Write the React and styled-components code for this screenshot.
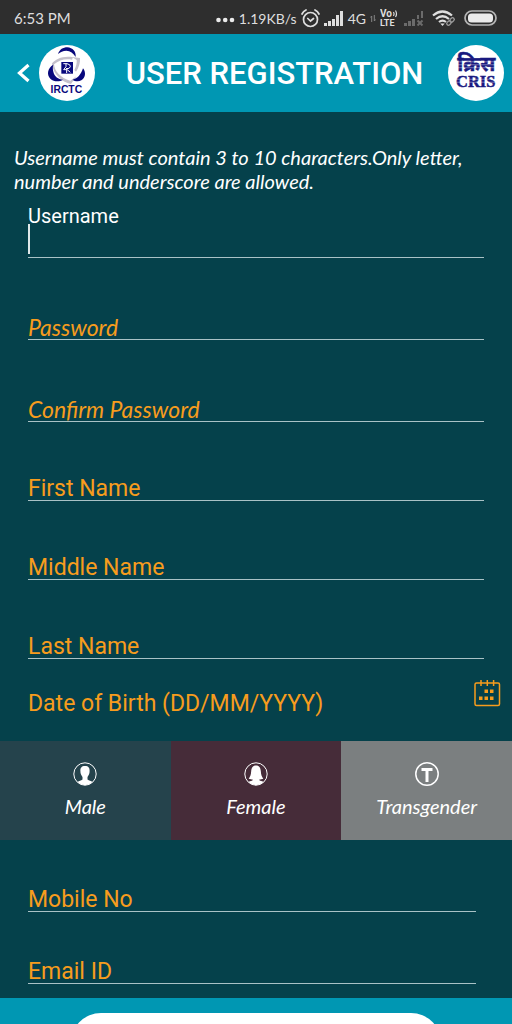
import React from "react";
import styled, { createGlobalStyle } from "styled-components";

const GlobalStyle=createGlobalStyle`
    * {
        box-sizing: border-box;
    }
    body {
        margin: 0;
        background: #05414b;
        font-family: Roboto, "Noto Sans", sans-serif;
    }
    button, input {
        font: inherit;
        color: inherit;
    }
`;

const handFont=`Lato, "Open Sans", sans-serif`;

const Screen=styled.div`
    display: flex;
    flex-direction: column;
    height: 100vh;
    color: #fff;
`;

const StatusBar=styled.div`
    display: flex;
    align-items: center;
    justify-content: space-between;
    flex: none;
    height: 34px;
    padding: 2px 15px 0 14px;
    background: #2e2e2e;
    color: #dedede;
    font-family: ${handFont};
    font-size: 15px;
`;

const StatusIcons=styled.div`
    display: flex;
    align-items: center;
    gap: 4px;
    font-size: 14px;
`;

const Header=styled.header`
    display: flex;
    align-items: center;
    flex: none;
    height: 78px;
    padding: 0 8px 0 16px;
    background: #0097b3;
`;

const BackButton=styled.button`
    display: flex;
    padding: 0;
    margin-right: 8px;
    border: 0;
    background: none;
`;

const Title=styled.h1`
    flex: 1;
    margin: 0;
    padding-left: 6px;
    font-size: 31px;
    font-weight: 500;
    text-align: center;
    white-space: nowrap;
`;

const Content=styled.main`
    flex: 1;
    min-height: 0;
    overflow-y: auto;
    scrollbar-width: none;
`;

const Note=styled.p`
    margin: 0;
    padding: 33px 14px 15px;
    font-family: ${handFont};
    font-size: 20px;
    font-style: italic;
    line-height: 24px;
`;

const FieldGroup=styled.div`
    display: flex;
    flex-direction: column;
    gap: ${props=>props.$gap}px;
    padding: ${props=>props.$gap}px ${props=>props.$right || 28}px 0 28px;
`;

const FieldBox=styled.div`
    display: grid;
    border-bottom: 1px solid #a9c2c6;
    > * {
        grid-area: 1 / 1;
    }
`;

const FieldLabel=styled.label`
    color: #f79c1d;
    font-family: ${props=>props.$hand ? handFont : "inherit"};
    font-style: ${props=>props.$hand ? "italic" : "normal"};
    font-size: 23px;
    line-height: ${props=>props.$hand ? 24 : 22}px;
    white-space: nowrap;
`;

const Input=styled.input`
    width: 100%;
    min-width: 0;
    height: 22px;
    padding: 0;
    border: 0;
    outline: 0;
    background: none;
`;

const Username=styled.div`
    padding: 0 28px;
`;

const UsernameLabel=styled.label`
    display: block;
    font-size: 20px;
    line-height: 16px;
`;

const Caret=styled.span`
    width: 2px;
    height: 30px;
    margin-bottom: 3px;
    background: #dfe8e9;
`;

const BirthRow=styled.div`
    display: flex;
    align-items: flex-end;
    padding: 21px 11px 26px 28px;
`;

const CalendarButton=styled.button`
    display: flex;
    padding: 0;
    margin-bottom: 8px;
    border: 0;
    background: none;
    color: #f79c1d;
`;

const Genders=styled.div`
    display: grid;
    grid-template-columns: repeat(3, 1fr);
`;

const Gender=styled.label`
    display: flex;
    flex-direction: column;
    align-items: center;
    gap: 8px;
    padding: 21px 0 22px;
    background: ${props=>props.$color};
    font-family: ${handFont};
    font-size: 20px;
    font-style: italic;
    line-height: 24px;
`;

const Radio=styled.input`
    position: absolute;
    opacity: 0;
    pointer-events: none;
`;

const Footer=styled.footer`
    margin-top: 14px;
    padding: 15px 71px;
    background: #0097b3;
`;

const SubmitButton=styled.button`
    display: block;
    width: 100%;
    height: 60px;
    border: 0;
    border-radius: 30px;
    background: #fff;
`;

const Bars=()=>(
    <svg width="20" height="15" viewBox="0 0 20 15" fill="#dedede">
        <rect x="0" y="12" width="3" height="3" />
        <rect x="4" y="10" width="3" height="5" />
        <rect x="8" y="8" width="3" height="7" />
        <rect x="12" y="4" width="3" height="11" />
        <rect x="16" y="0" width="3" height="15" />
    </svg>
);

const NoSignal=()=>(
    <svg width="24" height="15" viewBox="0 0 24 15" fill="#6b6b6b">
        <rect x="0" y="12" width="3" height="3" />
        <rect x="4" y="10" width="3" height="5" />
        <rect x="8" y="8" width="3" height="7" />
        <rect x="13" y="4" width="2" height="4" />
        <rect x="17" y="0" width="2" height="7" />
        <path d="M13.500 9.500l5 5M18.500 9.500l-5 5" stroke="#6b6b6b" strokeWidth="2" />
    </svg>
);

const Alarm=()=>(
    <svg width="19" height="19" viewBox="0 0 19 19" fill="none" stroke="#dedede" strokeWidth="1.700" strokeLinecap="round">
        <circle cx="9.500" cy="10.500" r="7" />
        <path d="M1 5C2 3 3 2 5 1M18 5C17 3 16 2 14 1M6.800 9.500L9.500 12L12.500 9.500" />
    </svg>
);

const DataArrows=()=>(
    <svg width="6" height="7" viewBox="0 0 6 7" stroke="#858585" fill="none">
        <path d="M1.700 7V1L0.300 2.500M4.300 0v6L5.700 4.500" />
    </svg>
);

const Volte=()=>(
    <svg width="20" height="18" viewBox="0 0 20 18" fill="#dedede" fontFamily="Roboto" fontWeight="700">
        <text x="0" y="8" fontSize="10">Vo</text>
        <text x="0" y="17" fontSize="9">LTE</text>
        <path d="M13.500 3Q14.800 5 13.500 7M15.500 1.500Q17.500 5 15.500 8" fill="none" stroke="#dedede" strokeWidth="1.200" />
    </svg>
);

const Wifi=()=>(
    <svg width="28" height="17" viewBox="0 0 28 17" fill="none" stroke="#dedede" strokeWidth="2.200">
        <path d="M1 5.500Q10.500-2.500 20 5.500M4 9Q10.500 3.500 17 9M7 12Q10.500 9.200 14 12" />
        <path d="M8.300 13.500h4.400L10.500 16z" fill="#dedede" stroke="none" />
        <g stroke="#9c9c9c" strokeWidth="1.300">
            <rect x="14.500" y="11.300" width="5" height="3.400" rx="1.700" transform="rotate(-45 17 13)" />
            <rect x="17.500" y="8.300" width="5" height="3.400" rx="1.700" transform="rotate(-45 20 10)" />
        </g>
    </svg>
);

const Battery=()=>(
    <svg width="33" height="16" viewBox="0 0 33 16">
        <rect x="1" y="1" width="31" height="14" rx="7" fill="none" stroke="#b5b5b5" strokeWidth="1.700" />
        <rect x="4" y="3.500" width="25" height="9" rx="3.500" fill="#ebebeb" />
    </svg>
);

const IrctcLogo=()=>(
    <svg width="56" height="56" viewBox="120 136 168 168" role="img" aria-label="IRCTC">
        <circle cx="204" cy="220" r="84" fill="#fff" />
        <g fill="#c4c0cb">
            <path d="M158 193C170 177 194 168 222 173L219 180C199 176 180 181 165 194Z" />
            <path d="M219 172L243 175C244 190 240 203 231 216L226 211C232 200 234 190 233 181Z" />
            <path d="M165 193C166 214 185 235 214 243L232 230L216 253C188 247 163 224 159 193Z" />
        </g>
        <g fill="#08087c">
            <path d="M177 163C182 149 192 143 205 143C221 144 232 156 230 172C223 160 214 153 202 153C192 153 184 157 177 163Z" />
            <path d="M163 195C146 204 142 225 154 237C165 247 181 247 192 240C178 239 166 230 163 216C161 208 161 201 163 195Z" />
            <path d="M252 206C262 217 259 236 247 242C238 247 227 245 221 240C235 237 246 225 252 206Z" />
            <rect x="187" y="187" width="35" height="35" />
            <text x="202" y="281" fontFamily="Liberation Sans" fontSize="31" fontWeight="700" textAnchor="middle">IRCTC</text>
        </g>
        <path d="M193 192H204Q215 194 214 201Q213 208 201 207L214 218M201 192V201L194 210H203V220" fill="none" stroke="#fff" strokeWidth="3" />
    </svg>
);

const CrisLogo=()=>(
    <svg width="56" height="56" viewBox="48 32 170 170" role="img" aria-label="CRIS">
        <circle cx="133" cy="117" r="85" fill="#fff" />
        <g fill="#19197f" stroke="#19197f" strokeWidth="1.500" textAnchor="middle" fontWeight="700">
            <text x="134" y="110" fontFamily="Noto Sans Devanagari, Noto Sans, FreeSans, sans-serif" fontSize="62">क्रिस</text>
            <text x="132" y="160" fontFamily="Liberation Serif" fontSize="50">CRIS</text>
        </g>
        <path d="M75 83H195M75 92H195M75 101H195M70 136H195M70 145H195" stroke="#fff" strokeWidth="1.200" />
    </svg>
);

const Calendar=()=>(
    <svg width="27" height="27" viewBox="0 0 27 27">
        <rect x="1" y="3" width="24.500" height="22.500" rx="1.500" fill="none" stroke="currentColor" strokeWidth="1.500" />
        <path d="M7 0v6M13.300 0v6M19.600 0v6" stroke="currentColor" strokeWidth="1.500" />
        <path d="M10.500 9.500h3.500v3.500h-3.500zM16 9.500h3.500v3.500H16zM5 16.500h3.500V20H5zM10.500 16.500h3.500V20h-3.500zM16 16.500h3.500V20H16z" fill="currentColor" />
    </svg>
);

const genderShapes={
    Male: <path d="M12 4C8.500 4 7.200 6 7.400 9C7.300 12 8.500 13.500 9.500 15V17.500C8 19 6 18.500 4.500 20Q8 23.300 12 23.300T19.500 20C18 18.500 16 19 14.500 17.500V15C15.500 13.500 16.700 12 16.600 9C16.800 6 15.500 4 12 4Z" fill="#fff" />,
    Female: <path d="M12 3.500C8.500 3.500 7.500 6 7.200 9C7 13 6 15 4.700 16.700L9 17.700C8.500 19 6 18.800 4.500 20Q8 23.300 12 23.300T19.500 20C18 18.800 15.500 19 15 17.700L19.300 16.700C18 15 17 13 16.800 9C16.500 6 15.500 3.500 12 3.500Z" fill="#fff" />,
    Transgender: <path d="M6.500 7.500H17.500M12 7.500V20" fill="none" stroke="#fff" strokeWidth="3" />,
};

const GenderIcon=({ name })=>(
    <svg width="24" height="24" viewBox="0 0 24 24">
        <circle cx="12" cy="12" r="11.200" fill="none" stroke="#fff" strokeWidth={name==="Transgender" ? 1.5 : 1} />
        {genderShapes[name]}
    </svg>
);

const Field=({ id, label, type="text", hand=false })=>(
    <FieldBox>
        <FieldLabel htmlFor={id} $hand={hand}>{label}</FieldLabel>
        <Input id={id} type={type} />
    </FieldBox>
);

const genders=[
    { name: "Male", color: "#25434c" },
    { name: "Female", color: "#462c39" },
    { name: "Transgender", color: "#7b7f80" },
];

const App=()=>(
    <Screen>
        <GlobalStyle />
        <StatusBar>
            <span>6:53 PM</span>
            <StatusIcons>
                <svg width="19" height="10" viewBox="0 0 19 10" fill="#ebebeb">
                    <circle cx="2.500" cy="7" r="2.300" />
                    <circle cx="9.200" cy="7" r="2.300" />
                    <circle cx="16" cy="7" r="2.300" />
                </svg>
                <span>1.19KB/s</span>
                <Alarm />
                <Bars />
                <span>4G</span>
                <DataArrows />
                <Volte />
                <NoSignal />
                <Wifi />
                <Battery />
            </StatusIcons>
        </StatusBar>
        <Header>
            <BackButton aria-label="Back">
                <svg width="15" height="20" viewBox="0 0 15 20" fill="none" stroke="#fff" strokeWidth="3.200">
                    <path d="M12.500 2L3.500 10L12.500 18" />
                </svg>
            </BackButton>
            <IrctcLogo />
            <Title>USER REGISTRATION</Title>
            <CrisLogo />
        </Header>
        <Content>
            <Note>
                Username must contain 3 to 10 characters.Only letter, number and underscore are allowed.
            </Note>
            <Username>
                <UsernameLabel htmlFor="username">Username</UsernameLabel>
                <FieldBox>
                    <Input id="username" type="text" />
                    <Caret />
                </FieldBox>
            </Username>
            <FieldGroup $gap={57}>
                <Field id="password" label="Password" type="password" hand />
                <Field id="confirm" label="Confirm Password" type="password" hand />
            </FieldGroup>
            <FieldGroup $gap={56}>
                <Field id="first" label="First Name" />
                <Field id="middle" label="Middle Name" />
                <Field id="last" label="Last Name" />
            </FieldGroup>
            <BirthRow>
                <FieldLabel htmlFor="birth">Date of Birth (DD/MM/YYYY)</FieldLabel>
                <Input id="birth" type="text" />
                <CalendarButton aria-label="Choose date">
                    <Calendar />
                </CalendarButton>
            </BirthRow>
            <Genders>
                {genders.map(({ name, color })=>(
                    <Gender key={name} $color={color}>
                        <Radio type="radio" name="gender" value={name} />
                        <GenderIcon name={name} />
                        {name}
                    </Gender>
                ))}
            </Genders>
            <FieldGroup $gap={49} $right={36}>
                <Field id="mobile" label="Mobile No" type="tel" />
                <Field id="email" label="Email ID" type="email" />
            </FieldGroup>
            <Footer>
                <SubmitButton aria-label="Register" />
            </Footer>
        </Content>
    </Screen>
);

export default App;
